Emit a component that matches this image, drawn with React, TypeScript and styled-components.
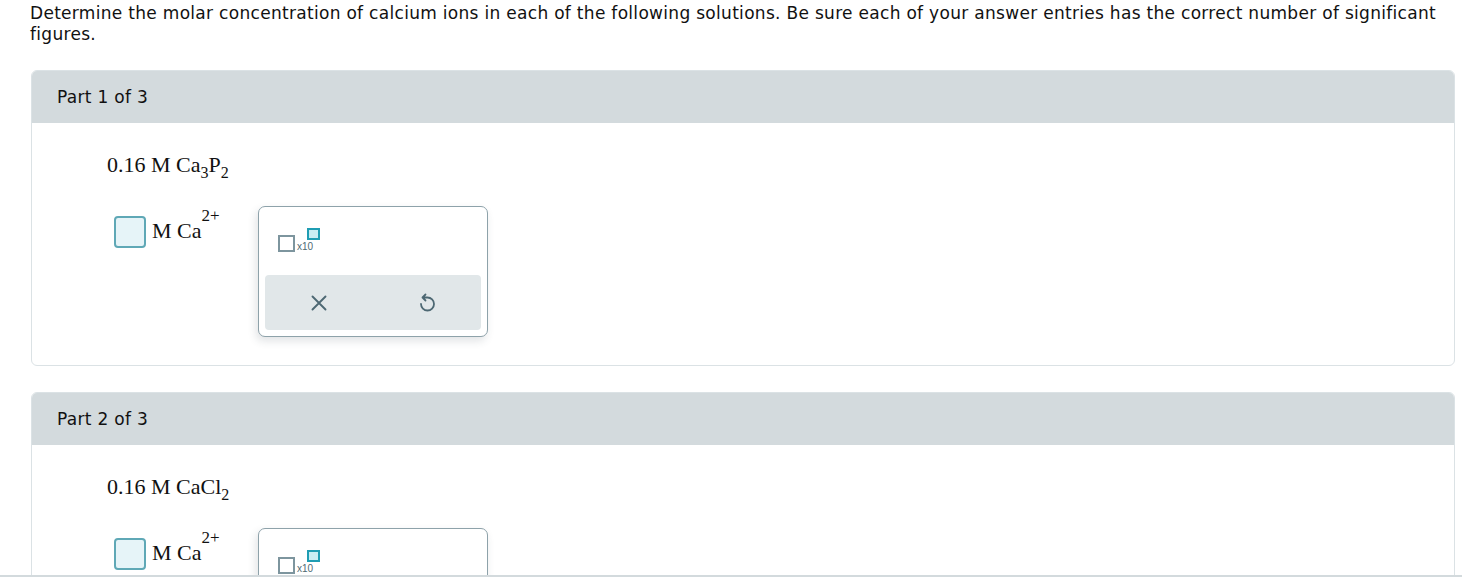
import React from 'react';
import styled, { createGlobalStyle } from 'styled-components';

const GlobalStyle = createGlobalStyle`
    body {
        margin: 0;
        font-family: "DejaVu Sans", Verdana, sans-serif;
        color: #111;
        background: #fff;
    }
`;

const Sub = styled.span`
    position: relative;
    top: 6px;
    font-size: 16px;
`;

const Sup = styled.span`
    position: relative;
    top: -17px;
    font-size: 17px;
`;

type PartData = {
    label: string;
    formula: () => React.ReactNode;
};

const parts: PartData[] = [
    {
        label: 'Part 1 of 3',
        formula: () => (
            <>
                0.16 M Ca<Sub>3</Sub>P<Sub>2</Sub>
            </>
        ),
    },
    {
        label: 'Part 2 of 3',
        formula: () => (
            <>
                0.16 M CaCl<Sub>2</Sub>
            </>
        ),
    },
];

const CloseIcon = () => (
    <svg width="16" height="16" viewBox="0 0 16 16" fill="none">
        <path d="M1.5 1.5 L14.5 14.5 M14.5 1.5 L1.5 14.5" stroke="#4d6873" strokeWidth="1.9" strokeLinecap="round" />
    </svg>
);

const UndoIcon = () => (
    <svg width="18" height="19" viewBox="0 0 18 19" fill="none">
        <path
            d="M7.5 1.5 L4.5 4.5 L7.5 7.5 M4.5 4.5 H9.5 A6.5 6.5 0 1 1 3 11"
            stroke="#4d6873"
            strokeWidth="1.8"
            strokeLinecap="round"
            strokeLinejoin="round"
        />
    </svg>
);

export default function App() {
    return (
        <Page>
            <GlobalStyle />
            <Prompt>
                Determine the molar concentration of calcium ions in each of the following solutions. Be sure each of your
                answer entries has the correct number of significant figures.
            </Prompt>
            {parts.map((part) => (
                <PartCard key={part.label}>
                    <PartHeader>{part.label}</PartHeader>
                    <PartBody>
                        <Formula>{part.formula()}</Formula>
                        <AnswerRow>
                            <AnswerField>
                                <InputBox />
                                <Unit>
                                    M Ca<Sup>2+</Sup>
                                </Unit>
                            </AnswerField>
                            <Palette>
                                <PaletteTop>
                                    <SciIcon>
                                        <BaseBox />
                                        <TimesTen>x10</TimesTen>
                                        <ExpBox />
                                    </SciIcon>
                                </PaletteTop>
                                <ActionBar>
                                    <ActionButton aria-label="clear">
                                        <CloseIcon />
                                    </ActionButton>
                                    <ActionButton aria-label="undo">
                                        <UndoIcon />
                                    </ActionButton>
                                </ActionBar>
                            </Palette>
                        </AnswerRow>
                    </PartBody>
                </PartCard>
            ))}
        </Page>
    );
}

const Page = styled.div`
    box-sizing: border-box;
    height: 577px;
    padding: 3px 7px 0 30px;
    border-bottom: 2px solid #d3dadd;
    overflow: hidden;
`;

const Prompt = styled.p`
    margin: 0 0 25px;
    font-size: 17px;
    line-height: 21px;
    letter-spacing: 0.3px;
`;

const PartCard = styled.section`
    margin: 0 0 26px 1px;
    border: 1px solid #dbe2e5;
    border-radius: 6px;
    overflow: hidden;
`;

const PartHeader = styled.div`
    height: 52px;
    display: flex;
    align-items: center;
    padding-left: 25px;
    background: #d3dadd;
    font-size: 17px;
    letter-spacing: 0.3px;
`;

const PartBody = styled.div`
    padding: 30px 0 28px 75px;
`;

const Formula = styled.div`
    font-family: "Liberation Serif", "Times New Roman", serif;
    font-size: 22px;
    line-height: 24px;
    color: #111;
`;

const AnswerRow = styled.div`
    display: flex;
    align-items: flex-start;
    margin: 27px 0 0 7px;
`;

const AnswerField = styled.div`
    display: flex;
    align-items: center;
    gap: 6px;
    width: 144px;
    margin-top: 10px;
`;

const InputBox = styled.div`
    box-sizing: border-box;
    width: 32px;
    height: 32px;
    border: 2px solid #5fa8b6;
    border-radius: 4px;
    background: #e6f4f8;
`;

const Unit = styled.span`
    font-family: "Liberation Serif", "Times New Roman", serif;
    font-size: 22px;
    line-height: 24px;
    color: #111;
`;

const Palette = styled.div`
    box-sizing: border-box;
    width: 230px;
    padding: 0 6px 6px;
    border: 1px solid #8ea2aa;
    border-radius: 7px;
    background: #fff;
    box-shadow: -2px 4px 9px rgba(40, 60, 70, 0.14);
`;

const PaletteTop = styled.div`
    height: 68px;
    padding: 21px 0 0 13px;
    box-sizing: border-box;
`;

const SciIcon = styled.div`
    display: inline-flex;
    align-items: flex-end;
    height: 24px;
`;

const BaseBox = styled.div`
    box-sizing: border-box;
    width: 17px;
    height: 17px;
    border: 2px solid #7d959e;
`;

const TimesTen = styled.span`
    margin-left: 2px;
    font-family: "Liberation Sans", Arial, sans-serif;
    font-size: 10px;
    line-height: 10px;
    color: #4f6a73;
`;

const ExpBox = styled.div`
    box-sizing: border-box;
    align-self: flex-start;
    width: 13px;
    height: 12px;
    margin-left: -6px;
    border: 2px solid #1f9db3;
    background: #c8edf3;
`;

const ActionBar = styled.div`
    display: flex;
    height: 55px;
    border-radius: 4px;
    background: #e1e7e9;
`;

const ActionButton = styled.button`
    flex: 1;
    display: flex;
    align-items: center;
    justify-content: center;
    padding: 0;
    border: none;
    background: transparent;
    cursor: pointer;
`;
